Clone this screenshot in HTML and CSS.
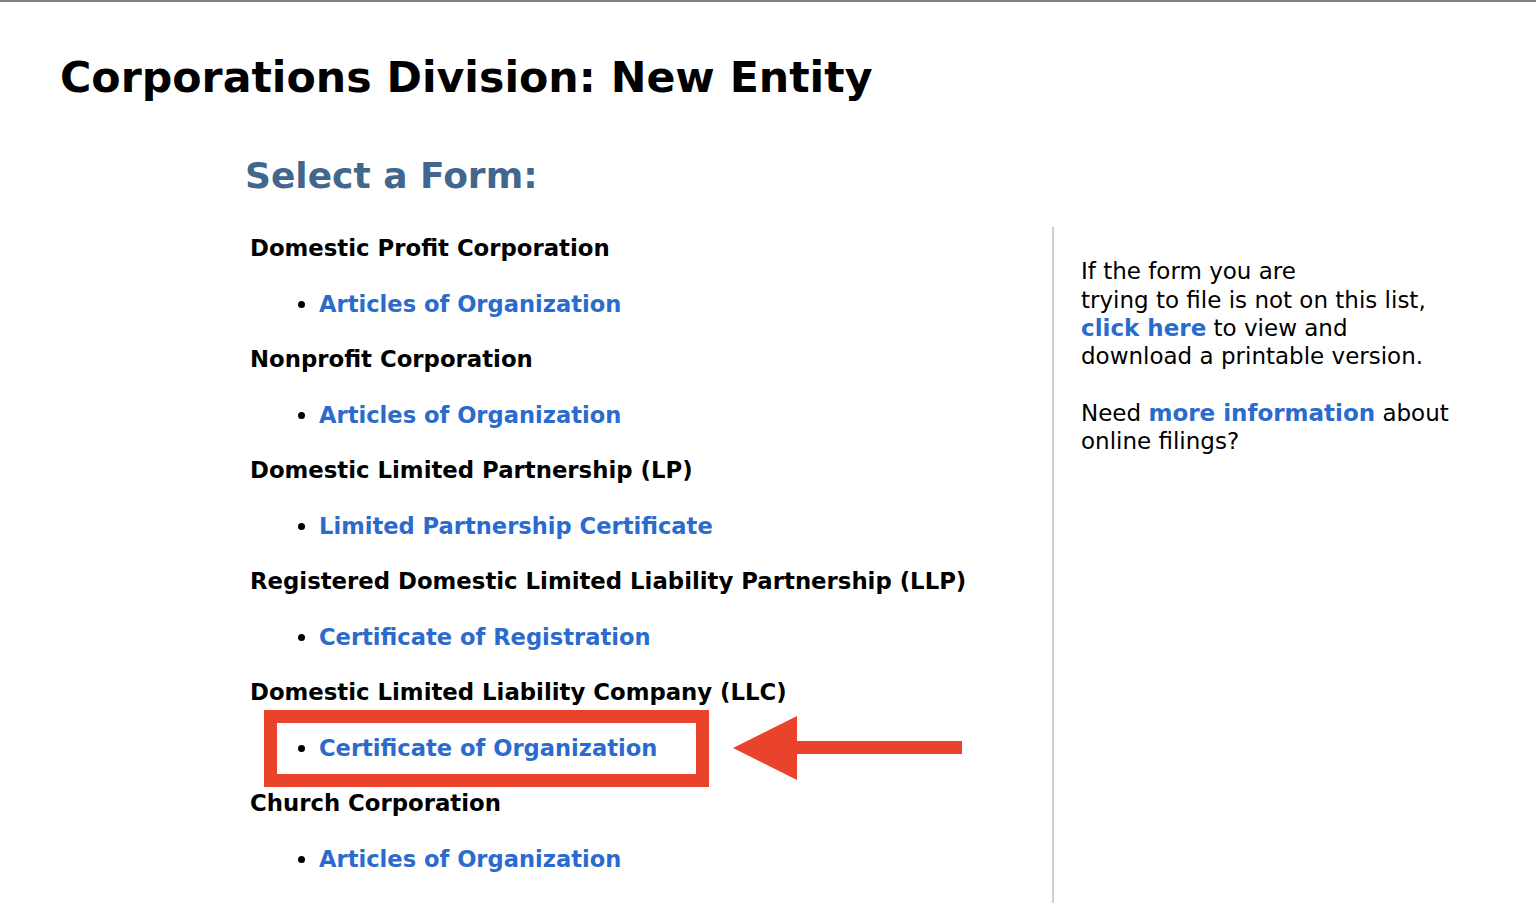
FILE: index.html
```html
<!DOCTYPE html>
<html lang="en">
<head>
    <meta charset="UTF-8">
    <meta name="viewport" content="width=device-width, initial-scale=1.0">
    <title>Corporations Division: New Entity</title>
    <link rel="stylesheet" href="styles.css">
</head>
<body>
    <h1 class="page-title">Corporations Division: New Entity</h1>

    <h2 class="form-title">Select a Form:</h2>

    <div class="forms">
        <div class="form-list">
            <h3>Domestic Profit Corporation</h3>
            <ul>
                <li><a href="#">Articles of Organization</a></li>
            </ul>

            <h3>Nonprofit Corporation</h3>
            <ul>
                <li><a href="#">Articles of Organization</a></li>
            </ul>

            <h3>Domestic Limited Partnership (LP)</h3>
            <ul>
                <li><a href="#">Limited Partnership Certificate</a></li>
            </ul>

            <h3>Registered Domestic Limited Liability Partnership (LLP)</h3>
            <ul>
                <li><a href="#">Certificate of Registration</a></li>
            </ul>

            <h3>Domestic Limited Liability Company (LLC)</h3>
            <ul>
                <li class="callout">
                    <a href="#">Certificate of Organization</a>
                    <span class="callout-box"></span>
                    <svg class="callout-arrow" width="229" height="64" viewBox="0 0 229 64">
                        <polygon points="0,32 64,0 64,64" fill="#e9432b"/>
                        <rect x="63" y="25" width="166" height="13" fill="#e9432b"/>
                    </svg>
                </li>
            </ul>

            <h3>Church Corporation</h3>
            <ul>
                <li><a href="#">Articles of Organization</a></li>
            </ul>
        </div>

        <div class="side-note">
            <p>If the form you are<br>
            trying to file is not on this list,<br>
            <a href="#">click here</a> to view and<br>
            download a printable version.</p>
            <p>Need <a href="#">more information</a> about<br>
            online filings?</p>
        </div>
    </div>
</body>
</html>
```

FILE: styles.css
```css
body {
    font-family: "DejaVu Sans", Verdana, sans-serif;
    margin: 0;
    border-top: 2px solid #7b838d;
    background-color: white;
    color: black;
}
a {
    color: #2b6bcd;
    font-weight: bold;
    text-decoration: none;
}
.page-title {
    font-size: 42.7px;
    line-height: 1.2;
    margin: 50px 0 0 60px;
}
.form-title {
    font-size: 36px;
    line-height: 1.2;
    color: #41678d;
    margin: 51px 0 0 245px;
}
.forms {
    display: flex;
    margin-top: 30px;
    min-height: 700px;
}
.form-list {
    width: 802px;
    padding: 7px 0 0 250px;
    font-size: 22.6px;
    line-height: 28px;
}
.form-list h3 {
    font-size: 22.8px;
    margin: 0 0 28px;
}
.form-list ul {
    margin: 0 0 27px;
    padding-left: 69px;
}
.callout {
    position: relative;
}
.callout-box {
    position: absolute;
    left: -55px;
    top: -24px;
    width: 445px;
    height: 77px;
    border: 13px solid #e9432b;
    box-sizing: border-box;
}
.callout-arrow {
    position: absolute;
    left: 414px;
    top: -18px;
}
.side-note {
    border-left: 2px solid #d0d0d0;
    padding: 30px 0 0 27px;
    width: 420px;
    font-size: 23px;
    line-height: 28.3px;
}
.side-note p {
    margin: 0 0 28.3px;
}
```
